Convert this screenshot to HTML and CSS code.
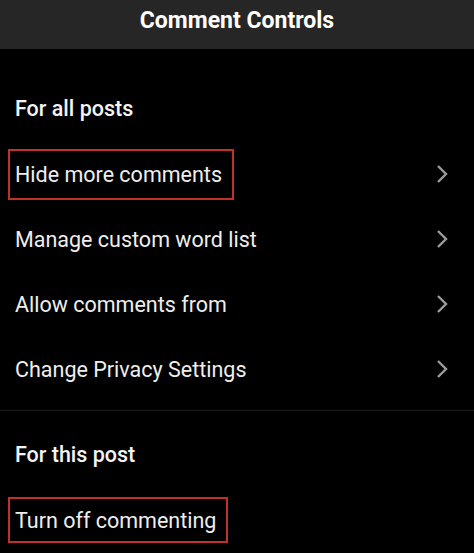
FILE: index.html
```html
<!DOCTYPE html>
<html>
<head>
<meta charset="utf-8">
<link rel="stylesheet" href="styles.css">
</head>
<body>
<header class="topbar"><h1 class="title">Comment Controls</h1></header>
<main class="content">
  <section class="section">
    <h2 class="section-title">For all posts</h2>
    <ul class="list">
      <li class="row"><span class="label boxed box-hide">Hide more comments</span><svg class="chev" viewBox="0 0 12 20"><path d="M2 2 L10 10 L2 18" /></svg></li>
      <li class="row"><span class="label">Manage custom word list</span><svg class="chev" viewBox="0 0 12 20"><path d="M2 2 L10 10 L2 18" /></svg></li>
      <li class="row"><span class="label">Allow comments from</span><svg class="chev" viewBox="0 0 12 20"><path d="M2 2 L10 10 L2 18" /></svg></li>
      <li class="row"><span class="label">Change Privacy Settings</span><svg class="chev" viewBox="0 0 12 20"><path d="M2 2 L10 10 L2 18" /></svg></li>
    </ul>
  </section>
  <section class="section second">
    <h2 class="section-title">For this post</h2>
    <ul class="list">
      <li class="row"><span class="label boxed box-turn">Turn off commenting</span></li>
    </ul>
  </section>
</main>
</body>
</html>
```

FILE: styles.css
```css
html, body {
  margin: 0;
  padding: 0;
  background: #000;
  color: #f2f2f2;
  font-family: Roboto, "Noto Sans", sans-serif;
  height: 100%;
  overflow: hidden;
}
.topbar {
  height: 49px;
  background: #262626;
  display: flex;
  align-items: center;
  justify-content: center;
}
.title {
  margin: 0;
  font-size: 23px;
  font-weight: 700;
  color: #fff;
  padding-bottom: 9px;
}
.content {
  display: flex;
  flex-direction: column;
}
.section {
  padding: 0 15px;
}
.section-title {
  margin: 0;
  height: 65px;
  display: flex;
  align-items: center;
  font-size: 21.5px;
  font-weight: 500;
  color: #f4f4f4;
  padding-top: 27px;
  box-sizing: content-box;
}
.list {
  list-style: none;
  margin: 0;
  padding: 0;
}
.row {
  height: 65px;
  box-sizing: border-box;
  padding-top: 2px;
  display: flex;
  align-items: center;
  justify-content: space-between;
  font-size: 21.5px;
  color: #eeeeee;
}
.label {
  display: inline-block;
  line-height: 25px;
}
.boxed {
  position: relative;
}
.boxed::after {
  content: "";
  position: absolute;
  border: 2px solid #c2302a;
}
.box-hide::after {
  top: -13px;
  bottom: -13px;
  left: -7px;
  right: -12px;
}
.box-turn::after {
  top: -11px;
  bottom: -10px;
  left: -7px;
  right: -12px;
}
.chev {
  width: 12px;
  height: 20px;
  margin-right: 11px;
  margin-top: -2px;
  fill: none;
  stroke: #9c9c9c;
  stroke-width: 2.4;
}
.second {
  margin-top: 9px;
  border-top: 1px solid #1c1c1c;
}
.second .section-title {
  padding-top: 11px;
}
```
